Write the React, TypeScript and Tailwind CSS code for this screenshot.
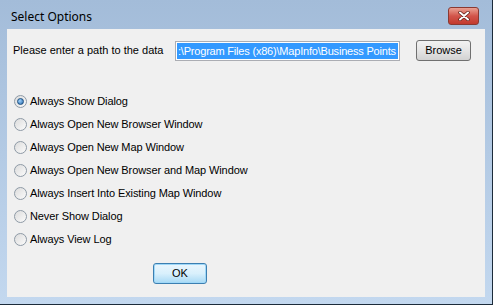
import React from 'react';

const options = [
  'Always Show Dialog',
  'Always Open New Browser Window',
  'Always Open New Map Window',
  'Always Open New Browser and Map Window',
  'Always Insert Into Existing Map Window',
  'Never Show Dialog',
  'Always View Log',
];

function Radio({ checked }: { checked: boolean }) {
  return (
    <span className="flex h-[13px] w-[13px] items-center justify-center rounded-full border border-[#8e9aa6] bg-gradient-to-br from-[#dcdcdc] to-[#fbfbfb]">
      {checked && (
        <span className="h-[7px] w-[7px] rounded-full border border-[#1d4f80] bg-[radial-gradient(circle_at_35%_35%,#9fd3ff,#2768a8)]" />
      )}
    </span>
  );
}

export default function App() {
  return (
    <div className="h-[305px] w-[493px] bg-white font-['Liberation_Sans',sans-serif]">
      <div className="flex h-[305px] w-[493px] flex-col border-r border-b border-[#1c2b3a] bg-gradient-to-b from-[#a3bcd9] to-[#c3d8ef]">
        {/* title bar */}
        <div className="flex h-[29px] items-start justify-between pl-[11px] pr-[13px]">
          <span className="mt-[8px] font-['Noto_Sans',sans-serif] text-[12px] leading-[18px] text-black">
            {'Select Options'}
          </span>
          <div className="mt-[7px] flex h-[18px] w-[31px] items-center justify-center rounded-[3px] border border-[#8a3a32] bg-gradient-to-b from-[#e8a093] via-[#d2544a] to-[#c23a2e]">
            <svg width="12" height="10" viewBox="0 0 12 10">
              <path d="M2 1.5 L10 8.5 M10 1.5 L2 8.5" stroke="#5a1a14" strokeWidth="3.4" strokeLinecap="round" />
              <path d="M2 1.5 L10 8.5 M10 1.5 L2 8.5" stroke="#ffffff" strokeWidth="2" strokeLinecap="round" />
            </svg>
          </div>
        </div>

        {/* client area */}
        <div className="mx-[7px] mb-[7px] flex flex-1 flex-col bg-[#f0f0f0] pl-[6px] text-[11px] text-black">
          <div className="mt-[11px] flex h-[21px] items-center">
            <span className="w-[162px]">{'Please enter a path to the data'}</span>
            <div className="flex h-[20px] w-[225px] items-center border border-[#abadb3] bg-white px-[1px]">
              <span className="min-w-0 flex-1 overflow-hidden whitespace-nowrap bg-[#3399ff] px-[1px] leading-[16px] tracking-[-0.2px] text-white">
                {':\\Program Files (x86)\\MapInfo\\Business Points'}
              </span>
            </div>
            <button className="ml-[16px] h-[21px] w-[55px] rounded-[3px] border border-[#707070] bg-gradient-to-b from-[#f2f2f2] via-[#e5e5e5] to-[#d2d2d2] text-[11px] text-black">
              {'Browse'}
            </button>
          </div>

          <div className="mt-[29px] flex flex-col tracking-[-0.1px]">
            {options.map((o, i) => (
              <div key={o} className="flex h-[23px] items-center gap-[3px] pl-[1px]">
                <Radio checked={i === 0} />
                <span>{o}</span>
              </div>
            ))}
          </div>

          <div className="mt-[12px] pl-[140px]">
            <button className="h-[21px] w-[54px] rounded-[3px] border border-[#3c7fb1] bg-gradient-to-b from-[#eaf6fd] via-[#d9f0fc] to-[#a7d9f5] text-[11px] text-black shadow-[inset_0_0_0_1px_#a0d8f8]">
              {'OK'}
            </button>
          </div>
        </div>
      </div>
    </div>
  );
}
